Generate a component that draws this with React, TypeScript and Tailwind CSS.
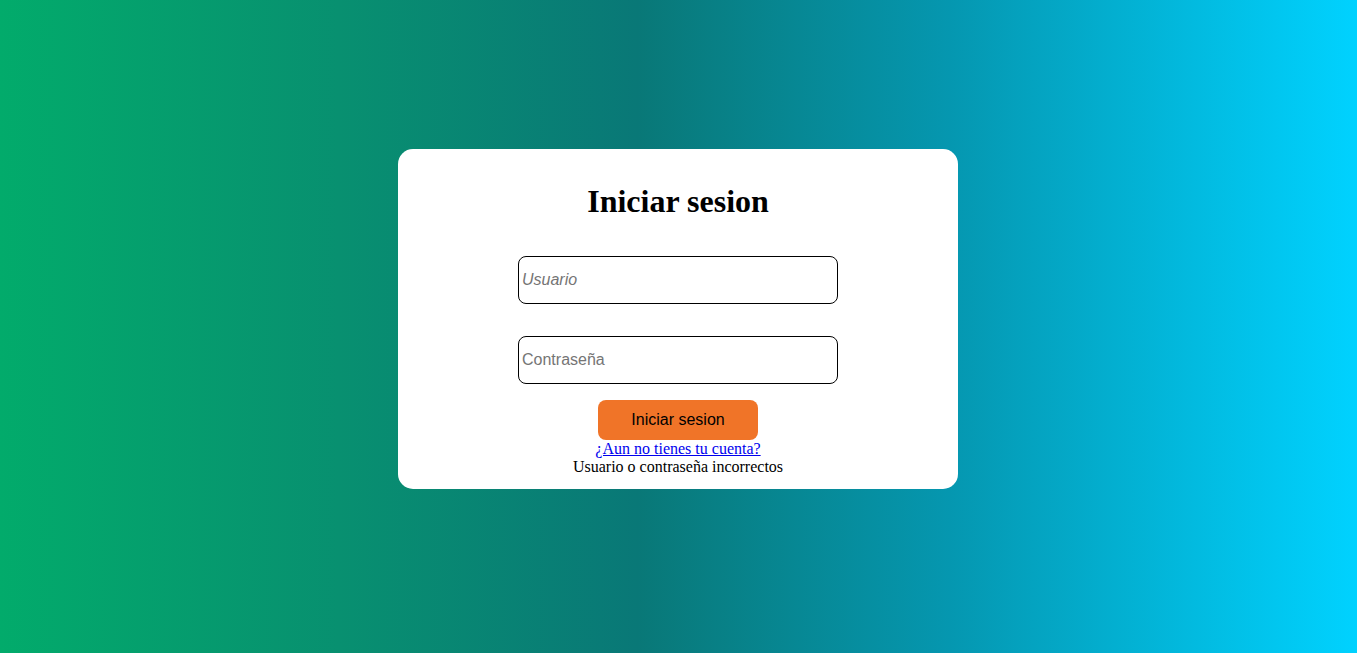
import React from "react";

export default function App() {
  return (
    <div className="w-full h-[653px] overflow-hidden bg-[linear-gradient(to_right,#02ab6b_0%,#089070_25%,#097877_47%,#0597b0_70%,#00d2ff_100%)] pt-[149px] pr-px font-['Liberation_Serif',serif]">
      <div className="mx-auto w-[560px] h-[340px] bg-white rounded-[15px] flex flex-col items-center pt-[34px]">
        <h1 className="text-[32px] leading-[37px] font-bold text-black font-['Liberation_Serif',serif]">
          Iniciar sesion
        </h1>
        <input
          type="text"
          placeholder="Usuario"
          className="mt-[36px] w-[320px] h-[48px] border border-black rounded-[8px] px-[3px] text-[16px] placeholder:italic placeholder:text-[#757575] outline-none font-['Liberation_Sans',Arial,sans-serif]"
        />
        <input
          type="password"
          placeholder="Contraseña"
          className="mt-[32px] w-[320px] h-[48px] border border-black rounded-[8px] px-[3px] text-[16px] placeholder:text-[#757575] outline-none font-['Liberation_Sans',Arial,sans-serif]"
        />
        <button className="mt-[16px] w-[160px] h-[40px] bg-[#f07428] rounded-[8px] text-[16px] text-black font-['Liberation_Sans',Arial,sans-serif]">
          Iniciar sesion
        </button>
        <a href="#" className="text-[16px] leading-[18px] text-[#0000ee] underline">
          ¿Aun no tienes tu cuenta?
        </a>
        <p className="text-[16px] leading-[18px] text-black">Usuario o contraseña incorrectos</p>
      </div>
    </div>
  );
}
